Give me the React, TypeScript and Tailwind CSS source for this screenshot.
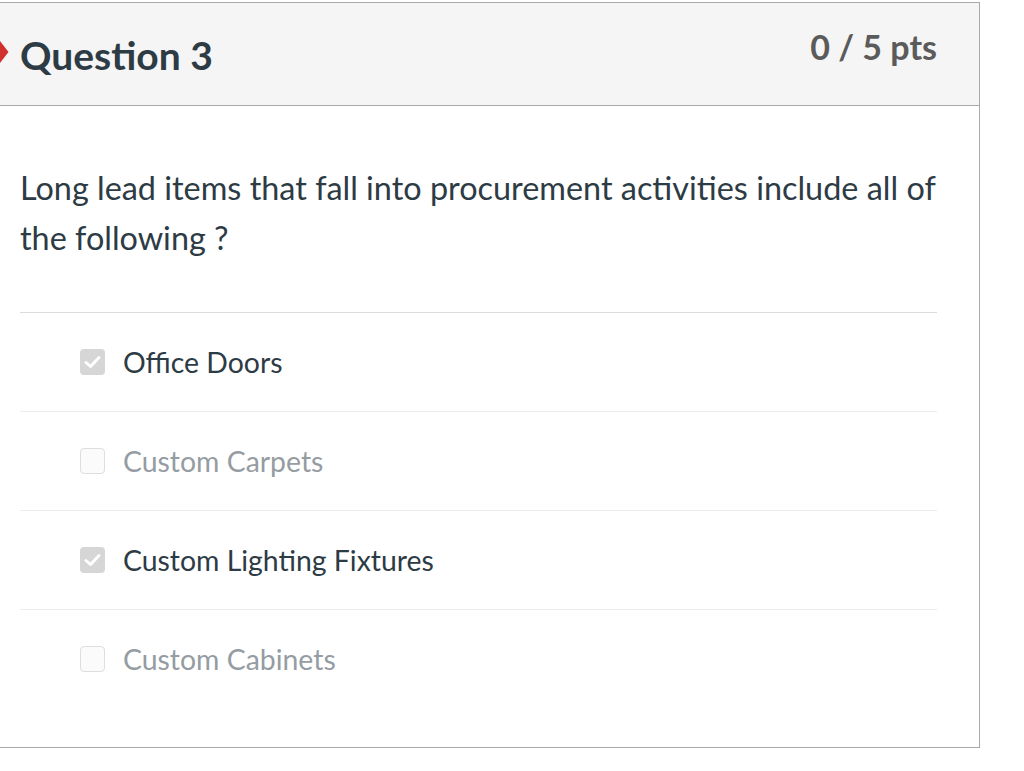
import React from "react";

interface Answer {
  label: string;
  checked: boolean;
}

const answers: Answer[] = [
  { label: "Office Doors", checked: true },
  { label: "Custom Carpets", checked: false },
  { label: "Custom Lighting Fixtures", checked: true },
  { label: "Custom Cabinets", checked: false },
];

const Checkbox: React.FC<{ checked: boolean }> = ({ checked }) =>
  checked ? (
    <span className="flex h-[26px] w-[25px] shrink-0 items-center justify-center rounded-[4px] bg-[#d6d6d6]">
      <svg width="17" height="14" viewBox="0 0 17 14" fill="none">
        <path d="M2 7.5 L6.5 11.5 L15 2.5" stroke="#fff" strokeWidth="3" strokeLinecap="round" strokeLinejoin="round" />
      </svg>
    </span>
  ) : (
    <span className="h-[26px] w-[25px] shrink-0 rounded-[4px] border border-[#dedede] bg-[#fbfbfb]" />
  );

export default function App() {
  return (
    <div className="min-h-screen bg-white pt-[2px] font-['Lato',sans-serif]">
      <div className="relative w-[980px] border-t border-r border-b border-[#a9a9a9] bg-white">
        {/* incorrect marker */}
        <svg className="absolute left-0 top-[37px]" width="10" height="24" viewBox="0 0 10 24">
          <polygon points="0,1 8.5,12 0,23" fill="#d0312d" />
        </svg>

        <div className="flex h-[103px] items-start justify-between border-b border-[#a9a9a9] bg-[#f5f5f5] pl-5 pr-[42px] pt-[24px]">
          <h2 className="mt-[4px] text-[39px] font-bold leading-[48px] text-[#2d3b45]">Question 3</h2>
          <div className="text-[34px] font-bold leading-[40px] text-[#5b5b5b]">0 / 5 pts</div>
        </div>

        <div className="pl-5 pr-[42px] pb-[39px] pt-[57px]">
          <p className="text-[32.4px] leading-[50px] text-[#2d3b45]">
            Long lead items that fall into procurement activities include all of the following ?
          </p>

          <div className="mt-[49px]">
            {answers.map((a, i) => (
              <div
                key={i}
                className={`flex h-[99px] items-center gap-[18px] border-t pl-[60px] ${
                  i === 0 ? "border-[#dcdcdc]" : "border-[#ececec]"
                }`}
              >
                <Checkbox checked={a.checked} />
                <span className={`text-[28.4px] leading-none ${a.checked ? "text-[#2d3b45]" : "text-[#959ca2]"}`}>
                  {a.label}
                </span>
              </div>
            ))}
          </div>
        </div>
      </div>
    </div>
  );
}
